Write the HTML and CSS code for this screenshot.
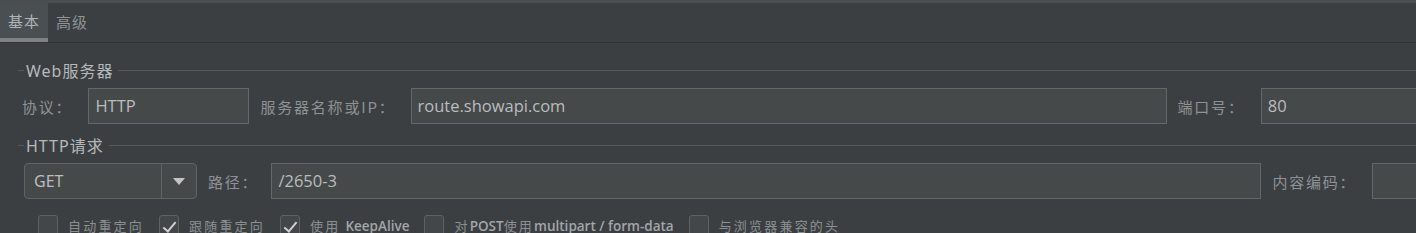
FILE: index.html
```html
<!DOCTYPE html>
<html lang="zh-CN">
<head>
    <meta charset="UTF-8">
    <title>HTTP请求</title>
    <link rel="stylesheet" href="styles.css">
</head>
<body>
    <div class="window">
        <div class="tabs">
            <div class="tab active">基本</div>
            <div class="tab">高级</div>
        </div>

        <div class="panel">
            <div class="group-title"><span>Web服务器</span></div>
            <div class="row">
                <label class="label">协议：</label>
                <div class="field field-protocol">HTTP</div>
                <label class="label">服务器名称或IP：</label>
                <div class="field field-server">route.showapi.com</div>
                <label class="label">端口号：</label>
                <div class="field field-port">80</div>
            </div>

            <div class="group-title second"><span>HTTP请求</span></div>
            <div class="row">
                <div class="combo">
                    <div class="combo-value">GET</div>
                    <div class="combo-arrow"></div>
                </div>
                <label class="label">路径：</label>
                <div class="field field-path">/2650-3</div>
                <label class="label">内容编码：</label>
                <div class="field field-encoding"></div>
            </div>

            <div class="checks">
                <div class="check"><span class="box"></span>自动重定向</div>
                <div class="check"><span class="box checked"></span>跟随重定向</div>
                <div class="check"><span class="box checked"></span>使用<span class="latin spaced">KeepAlive</span></div>
                <div class="check"><span class="box"></span>对<span class="latin">POST</span>使用<span class="latin">multipart / form-data</span></div>
                <div class="check"><span class="box"></span>与浏览器兼容的头</div>
            </div>
        </div>
    </div>
</body>
</html>
```

FILE: styles.css
```css
* {
    margin: 0;
    padding: 0;
    box-sizing: border-box;
}

body {
    background: #3c3f41;
    width: 1416px;
    height: 233px;
    overflow: hidden;
    font-family: "Open Sans", "Noto Sans CJK SC", sans-serif;
    color: #bbbbbb;
}

.window {
    border-top: 3px solid #4b4e51;
    width: 1416px;
    overflow: hidden;
}

.tabs {
    display: flex;
    height: 40px;
    border-bottom: 1px solid #303234;
}

.tab {
    padding: 0 8px 0 8px;
    font-size: 15px;
    line-height: 38px;
    color: #8f9396;
    letter-spacing: 1px;
    font-family: "Noto Sans CJK SC", sans-serif;
}

.tab.active {
    background: #4a4f52;
    color: #b0b4b7;
    line-height: 36px;
    border-bottom: 4px solid #7c8286;
}

.panel {
    padding: 17px 0 0 18px;
}

.group-title {
    display: flex;
    align-items: center;
    height: 20px;
    margin-bottom: 8px;
}

.group-title::before {
    content: "";
    width: 6px;
    border-top: 1px solid #55595c;
}

.group-title::after {
    content: "";
    flex: 1;
    border-top: 1px solid #55595c;
}

.group-title span {
    padding: 0 5px 0 2px;
    font-size: 16px;
    color: #b6b9bc;
    font-family: "Noto Sans", "Noto Sans CJK SC", sans-serif;
    letter-spacing: 1px;
}

.group-title.second {
    margin-top: 11px;
}

.row {
    display: flex;
    align-items: center;
    height: 36px;
    padding-left: 4px;
}

.label {
    font-family: "Noto Sans CJK SC", sans-serif;
    font-size: 15px;
    letter-spacing: 1.8px;
    color: #8e9295;
    margin-right: 16px;
    white-space: nowrap;
}

.field {
    height: 36px;
    border: 1px solid #63676a;
    background: #45494a;
    font-size: 16.5px;
    line-height: 34px;
    padding-left: 6px;
    color: #bcbcbc;
    margin-right: 11px;
    flex-shrink: 0;
}

.field-protocol { width: 161px; }
.field-server { width: 756px; }
.field-port { width: 200px; }
.field-path { width: 990px; }
.field-encoding { width: 100px; }

.label + .field-server { margin-left: -1px; }
.label + .field-path { margin-left: -3px; }

.combo {
    display: flex;
    width: 173px;
    height: 36px;
    margin-left: 2px;
    margin-right: 11px;
    border: 1px solid #5f6366;
    border-radius: 4px;
    background: #45494a;
    flex-shrink: 0;
}

.combo-value {
    flex: 1;
    padding-left: 9px;
    font-size: 16px;
    line-height: 34px;
    color: #bcbcbc;
    font-family: "Noto Sans", sans-serif;
}

.combo-arrow {
    width: 35px;
    border-left: 1px solid #5f6366;
    position: relative;
}

.combo-arrow::after {
    content: "";
    position: absolute;
    left: 11px;
    top: 14px;
    border-left: 6px solid transparent;
    border-right: 6px solid transparent;
    border-top: 7px solid #c4c4c4;
}

.checks {
    display: flex;
    align-items: flex-start;
    margin-top: 16px;
    padding-left: 20px;
}

.check {
    display: flex;
    align-items: flex-start;
    font-family: "Noto Sans CJK SC", sans-serif;
    font-size: 13px;
    letter-spacing: 2.2px;
    color: #8b8f92;
    margin-right: 15px;
    line-height: 22px;
}

.check .latin {
    font-family: "Open Sans", sans-serif;
    letter-spacing: 0;
    font-weight: 600;
    color: #a2a6a9;
    font-size: 13.5px;
}

.check .latin.spaced {
    margin-left: 5px;
}

.box {
    width: 20px;
    height: 22px;
    border: 1px solid #5e6265;
    border-radius: 3px;
    background: #43474a;
    margin-right: 10px;
    position: relative;
    flex-shrink: 0;
}

.box.checked::after {
    content: "";
    position: absolute;
    left: 6px;
    top: 3px;
    width: 5px;
    height: 11px;
    border-right: 2px solid #d0d0d0;
    border-bottom: 2px solid #d0d0d0;
    transform: rotate(40deg);
}
```
